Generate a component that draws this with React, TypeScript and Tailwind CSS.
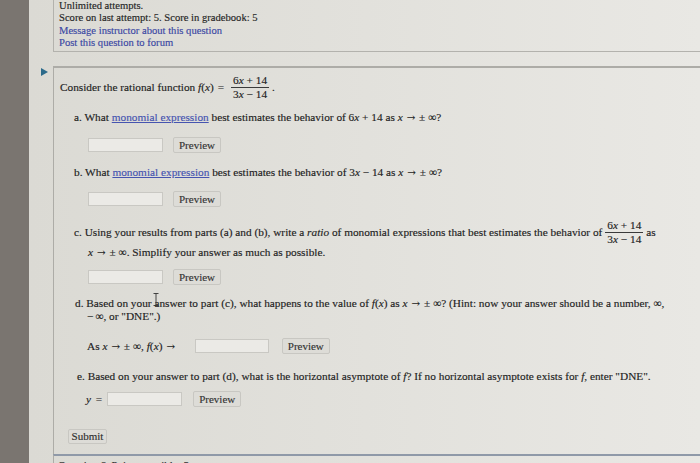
import React from "react";

function Frac({ n, d }: { n: React.ReactNode; d: React.ReactNode }) {
  return (
    <span className="inline-flex flex-col items-center mx-[3px] text-[11.3px]">
      <span className="px-[2px] leading-[13px]">{n}</span>
      <span className="self-stretch border-t border-[#3a3a3a] px-[2px] text-center leading-[13px]">{d}</span>
    </span>
  );
}

const X = () => <i>x</i>;
const F = () => <i>f</i>;
const Fx = () => (
  <span>
    <i>f</i>(<i>x</i>)
  </span>
);
const Arrow = () => (
  <span className="mx-[4px] font-['DejaVu_Serif',serif] text-[10px]">→</span>
);
const ToInf = () => (
  <span>
    <X />
    <Arrow />
    ±<span className="ml-[3px]">∞</span>
  </span>
);

const Num = () => (
  <span>
    6<i>x</i> + 14
  </span>
);
const Den = () => (
  <span>
    3<i>x</i> − 14
  </span>
);

const Link = ({ children }: { children: React.ReactNode }) => (
  <span className="text-[#4654b0] underline decoration-[#4654b0] [-webkit-text-stroke:0.15px_#4654b0]">{children}</span>
);

const Input = ({ w }: { w: string }) => (
  <div className={`${w} h-[14px] border border-[#c9c8c3] bg-[#ebeae6]`} />
);

const Preview = () => (
  <button className="h-[16px] w-[48px] border border-[#c8c7c2] bg-[#dddcd7] text-[11px] leading-none text-[#333] rounded-[2px] font-['Liberation_Serif',serif] [-webkit-text-stroke:0.15px_#333]">
    Preview
  </button>
);

export default function App() {
  return (
    <div className="relative w-[700px] h-[463px] overflow-hidden flex bg-[#dcdbd5] font-['Liberation_Serif',serif] text-[#222] [-webkit-text-stroke:0.15px_#222]">
      <div className="w-[29px] shrink-0 bg-[#7a7570]" />
      <div className="flex-1 flex flex-col bg-gradient-to-r from-[#dbdad4] to-[#e9e8e4]">
        {/* top info panel */}
        <div className="flex">
          <div className="w-[24px] shrink-0" />
          <div className="flex-1 h-[52px] border-l border-b border-[#b3b2ad] pl-[5px] text-[10.6px] leading-[12.3px] text-[#262626]">
            <div>Unlimited attempts.</div>
            <div>Score on last attempt: 5. Score in gradebook: 5</div>
            <div className="text-[#3a47a3] [-webkit-text-stroke:0.15px_#3a47a3]">Message instructor about this question</div>
            <div className="text-[#3a47a3] [-webkit-text-stroke:0.15px_#3a47a3]">Post this question to forum</div>
          </div>
        </div>

        {/* main question panel */}
        <div className="flex mt-[14px]">
          <div className="w-[24px] shrink-0 pl-[12px] pt-[2px]">
            <svg width="7" height="8" viewBox="0 0 7 8">
              <polygon points="0,0 7,4 0,8" fill="#2b6a8a" />
            </svg>
          </div>
          <div className="flex-1 border-l border-t-2 border-[#adaca7] pl-[6px] pt-[5px] pb-[9px] flex flex-col text-[11.3px] whitespace-nowrap">
            <div className="h-[28px] flex items-center">
              <span>Consider the rational function&nbsp;</span>
              <Fx />
              <span className="mx-[4px]">=</span>
              <Frac n={<Num />} d={<Den />} />
              <span>.</span>
            </div>

            <div className="mt-[10px] pl-[14px] leading-[13px]">
              a. What <Link>monomial expression</Link> best estimates the behavior of 6<X /> + 14 as <ToInf />?
            </div>
            <div className="mt-[13px] pl-[28px] h-[16px] flex items-center gap-[10px]">
              <Input w="w-[75px]" />
              <Preview />
            </div>

            <div className="mt-[13px] pl-[14px] leading-[13px]">
              b. What <Link>monomial expression</Link> best estimates the behavior of 3<X /> − 14 as <ToInf />?
            </div>
            <div className="mt-[12px] pl-[28px] h-[16px] flex items-center gap-[10px]">
              <Input w="w-[75px]" />
              <Preview />
            </div>

            <div className="mt-[11px] pl-[14px] h-[28px] flex items-center">
              <span>
                c. Using your results from parts (a) and (b), write a <i>ratio</i> of monomial expressions that best estimates the behavior of
              </span>
              <Frac n={<Num />} d={<Den />} />
              <span>as</span>
            </div>
            <div className="pl-[28px] leading-[13px]">
              <ToInf />. Simplify your answer as much as possible.
            </div>
            <div className="mt-[10px] pl-[28px] h-[16px] flex items-center gap-[10px]">
              <Input w="w-[75px]" />
              <Preview />
            </div>

            <div className="mt-[12px] pl-[15px] leading-[13px]">
              d. Based on your answer to part (c), what happens to the value of <Fx /> as <ToInf />? (Hint: now your answer should be a number, ∞,
            </div>
            <div className="pl-[27px] leading-[13px]">
              −<span className="ml-[2px]">∞</span>, or "DNE".)
            </div>
            <div className="mt-[15px] pl-[27px] h-[16px] flex items-center">
              <span>
                As <ToInf />, <Fx />
                <Arrow />
              </span>
              <div className="ml-[16px]">
                <Input w="w-[74px]" />
              </div>
              <div className="ml-[13px]">
                <Preview />
              </div>
            </div>

            <div className="mt-[16px] pl-[17px] leading-[13px]">
              e. Based on your answer to part (d), what is the horizontal asymptote of <F />? If no horizontal asymptote exists for <F />, enter "DNE".
            </div>
            <div className="mt-[9px] pl-[26px] h-[14px] flex items-center">
              <span>
                <i>y</i> <span className="ml-[2px]">=</span>
              </span>
              <div className="ml-[5px]">
                <Input w="w-[75px]" />
              </div>
              <div className="ml-[11px]">
                <Preview />
              </div>
            </div>

            <div className="mt-[22px] pl-[8px]">
              <button className="h-[15px] w-[39px] border border-[#c8c7c2] bg-[#dddcd7] text-[11px] leading-none text-[#333] rounded-[2px] font-['Liberation_Serif',serif]">
                Submit
              </button>
            </div>
          </div>
        </div>

        {/* next question panel (cut off) */}
        <div className="flex">
          <div className="w-[24px] shrink-0" />
          <div className="flex-1 border-l border-t-2 border-l-[#adaca7] border-t-[#8f99a8] pl-[4px] pt-[3px] text-[11px] leading-[13px] text-[#333]">
            Question 6. Points possible: 5
          </div>
        </div>
      </div>

      {/* mouse I-beam cursor */}
      <svg className="absolute left-[153px] top-[293px]" width="6" height="13" viewBox="0 0 6 13">
        <path d="M0.5 0.5 H5.5 M3 0.5 V12.5 M0.5 12.5 H5.5" stroke="#333" strokeWidth="0.9" fill="none" />
      </svg>
    </div>
  );
}
